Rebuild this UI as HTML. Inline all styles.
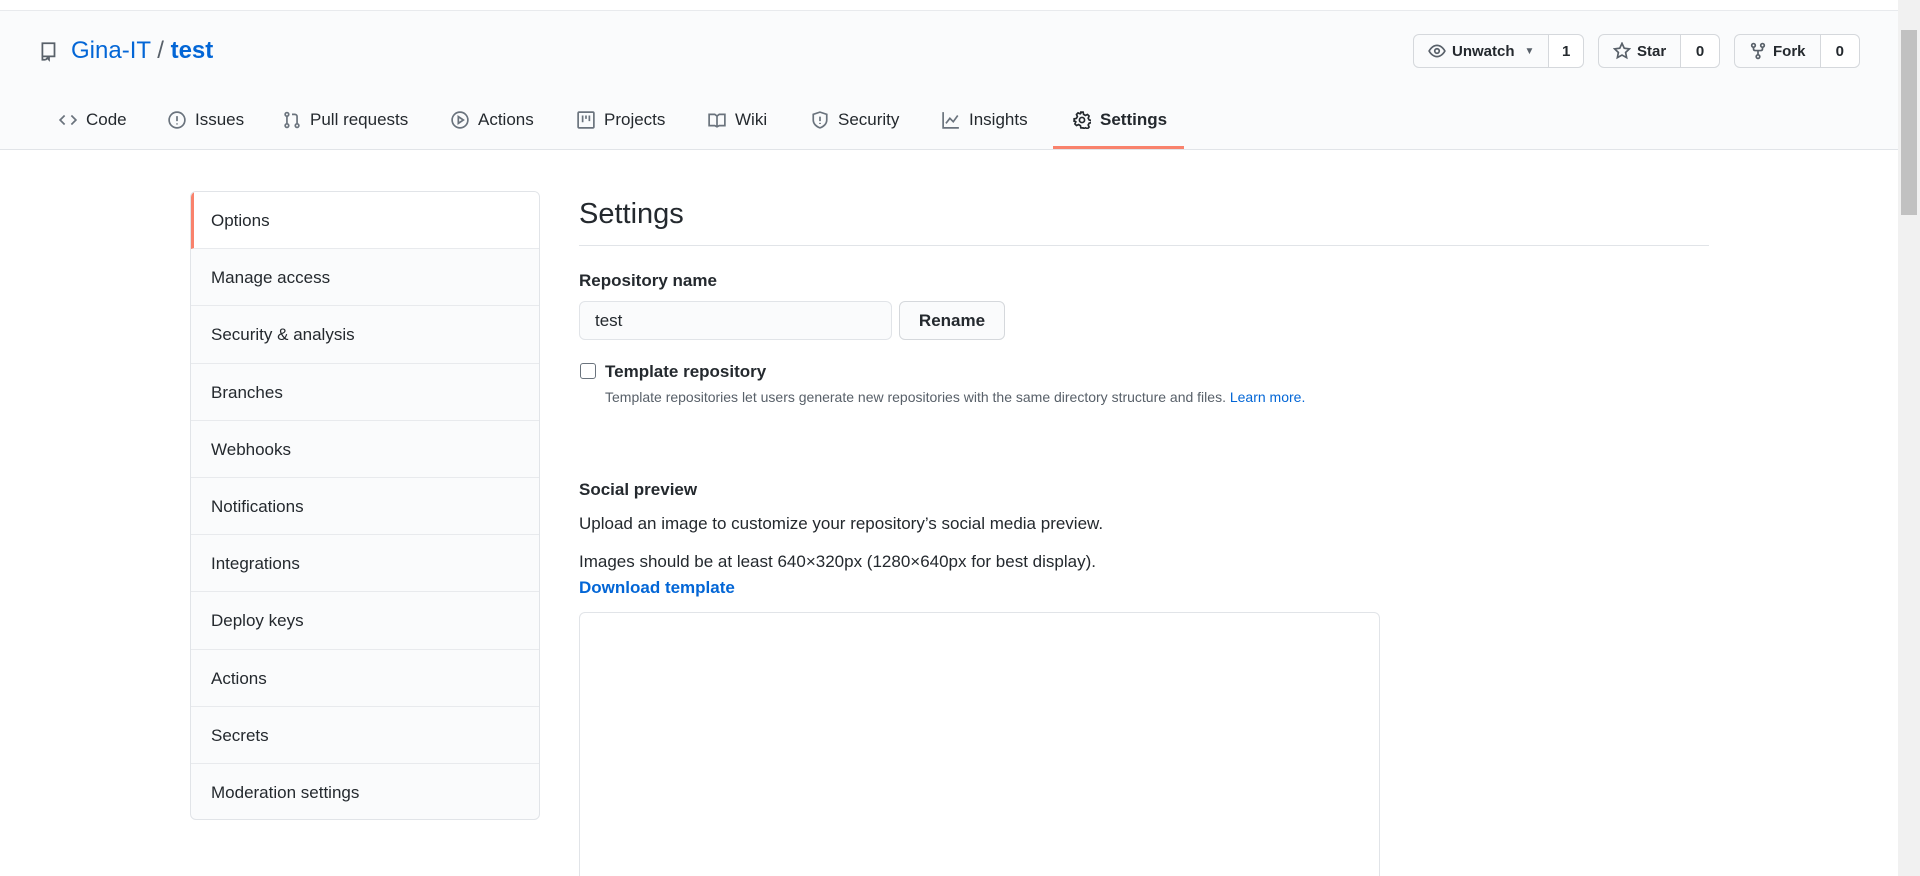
<!DOCTYPE html>
<html><head><meta charset="utf-8"><style>
*{box-sizing:border-box;margin:0;padding:0}
html,body{width:1920px;height:876px;overflow:hidden}
body{background:#fff;font-family:"Liberation Sans",sans-serif;color:#24292e;font-size:17px;position:relative}
.a{position:absolute;white-space:nowrap}
.hdr{position:absolute;left:0;top:10px;width:1898px;height:140px;background:#fafbfc;border-top:1px solid #e8eaed;border-bottom:1px solid #e1e4e8}
.tab{position:absolute;top:110px;font-size:17px;color:#24292e;display:flex;align-items:center;gap:9px}
.tab svg{width:18px;height:18px;fill:none;stroke:#6a737d;stroke-width:1.5}
.btn{position:absolute;top:34px;height:34px;border:1px solid #d5d8dc;border-radius:6px;background:#fafbfc;display:flex;font-size:15px;font-weight:bold;color:#24292e}
.btn .l{display:flex;align-items:center;gap:6px;padding:0 14px;border-right:1px solid #d5d8dc;height:100%}
.btn .r{display:flex;align-items:center;justify-content:center;flex:1;background:#fff;border-radius:0 6px 6px 0}
.btn svg{width:18px;height:18px;fill:none;stroke:#586069;stroke-width:1.5}
.side{position:absolute;left:190px;top:191px;width:350px;height:629px;border:1px solid #e1e4e8;border-radius:6px;overflow:hidden;background:#fafbfc}
.side div{height:57.2px;border-bottom:1px solid #e8eaed;padding-left:20px;line-height:57px;font-size:17px;color:#24292e}
.side div:first-child{background:#fff;border-left:3px solid #f9826c;padding-left:17px}
.side div:last-child{border-bottom:none}
</style></head><body>
<div class="hdr"></div>
<svg class="a" style="left:40px;top:41px" width="18" height="22" viewBox="0 0 16 20" fill="none" stroke="#586069" stroke-width="1.6"><path d="M2 2h11v12H2zM2 14v3h3M5 17l1.5-1.5L8 17v-3"/></svg>
<div class="a" style="left:71px;top:37px;font-size:24px;color:#0366d6">Gina-IT <span style="color:#586069">/</span> <b>test</b></div>

<div class="tab" style="left:59px"><svg viewBox="0 0 16 16"><path d="M5 4L1 8l4 4M11 4l4 4-4 4"/></svg>Code</div>
<div class="tab" style="left:168px"><svg viewBox="0 0 16 16"><circle cx="8" cy="8" r="7"/><path d="M8 4.5v4.5M8 11v1"/></svg>Issues</div>
<div class="tab" style="left:283px"><svg viewBox="0 0 16 16"><circle cx="3.5" cy="3" r="1.6"/><circle cx="3.5" cy="13" r="1.6"/><circle cx="12.5" cy="13" r="1.6"/><path d="M3.5 4.6v6.8M12.5 11.4V5a2 2 0 00-2-2H8"/></svg>Pull requests</div>
<div class="tab" style="left:451px"><svg viewBox="0 0 16 16"><circle cx="8" cy="8" r="7"/><path d="M6.5 5v6l4.5-3z"/></svg>Actions</div>
<div class="tab" style="left:577px"><svg viewBox="0 0 16 16"><rect x="1" y="1" width="14" height="14" rx="1"/><path d="M5 4v6M8 4v3M11 4v5"/></svg>Projects</div>
<div class="tab" style="left:708px"><svg viewBox="0 0 16 16"><path d="M1 3h5l2 1.5L10 3h5v10h-5l-2 1-2-1H1zM8 4.5v9.5"/></svg>Wiki</div>
<div class="tab" style="left:811px"><svg viewBox="0 0 16 16"><path d="M8 1l6 2v5c0 3.5-3 6-6 7-3-1-6-3.5-6-7V3z M8 5v4M8 10.5v1"/></svg>Security</div>
<div class="tab" style="left:942px"><svg viewBox="0 0 16 16"><path d="M1 1v14h14M3.5 11l3.5-4.5 3 3 4-5.5"/></svg>Insights</div>
<div class="tab" style="left:1073px;font-weight:bold"><svg viewBox="0 0 16 16" style="stroke:#24292e"><circle cx="8" cy="8" r="2.3"/><path d="M7 1h2l.4 2 1.6.9 1.9-.8 1.4 1.4-.8 1.9.9 1.6 2 .4v2l-2 .4-.9 1.6.8 1.9-1.4 1.4-1.9-.8-1.6.9L9 15H7l-.4-2-1.6-.9-1.9.8-1.4-1.4.8-1.9L1.6 9 1 9V7l2-.4.9-1.6-.8-1.9 1.4-1.4 1.9.8L7 2z"/></svg>Settings</div>
<div class="a" style="left:1053px;top:146px;width:131px;height:3px;background:#f9826c"></div>

<div class="btn" style="left:1413px;width:171px"><div class="l"><svg viewBox="0 0 16 16"><path d="M1 8s2.5-5 7-5 7 5 7 5-2.5 5-7 5-7-5-7-5z"/><circle cx="8" cy="8" r="2"/></svg>Unwatch <span style="font-size:10px;color:#586069;margin-left:4px">▼</span></div><div class="r">1</div></div>
<div class="btn" style="left:1598px;width:122px"><div class="l"><svg viewBox="0 0 16 16"><path d="M8 1.2l2 4.3 4.6.6-3.4 3.2.9 4.6L8 11.6l-4.1 2.3.9-4.6L1.4 6.1 6 5.5z"/></svg>Star</div><div class="r">0</div></div>
<div class="btn" style="left:1734px;width:126px"><div class="l"><svg viewBox="0 0 16 16"><circle cx="4" cy="3" r="1.6"/><circle cx="12" cy="3" r="1.6"/><circle cx="8" cy="13" r="1.6"/><path d="M4 4.6v1.4c0 1 .7 1.6 1.6 1.6h4.8c1 0 1.6-.6 1.6-1.6V4.6M8 7.6v3.8"/></svg>Fork</div><div class="r">0</div></div>

<div class="a" style="left:1898px;top:0;width:22px;height:876px;background:#f1f1f1"></div>
<div class="a" style="left:1901px;top:30px;width:16px;height:185px;background:#c1c1c1"></div>

<div class="side"><div>Options</div><div>Manage access</div><div>Security &amp; analysis</div><div>Branches</div><div>Webhooks</div><div>Notifications</div><div>Integrations</div><div>Deploy keys</div><div>Actions</div><div>Secrets</div><div>Moderation settings</div></div>

<div class="a" style="left:579px;top:198px;font-size:29px">Settings</div>
<div class="a" style="left:579px;top:245px;width:1130px;height:1px;background:#e1e4e8"></div>
<div class="a" style="left:579px;top:271px;font-size:17px;font-weight:bold">Repository name</div>
<div class="a" style="left:579px;top:301px;width:313px;height:39px;border:1px solid #e1e4e8;border-radius:6px;background:#fafbfc;padding:9px 15px;font-size:17px">test</div>
<div class="a" style="left:899px;top:301px;width:106px;height:39px;border:1px solid #d5d8dc;border-radius:6px;background:#fafbfc;text-align:center;line-height:37px;font-weight:bold;font-size:17px">Rename</div>
<div class="a" style="left:580px;top:363px;width:16px;height:16px;border:1px solid #6a737d;border-radius:3px;background:#fff"></div>
<div class="a" style="left:605px;top:362px;font-size:17px;font-weight:bold">Template repository</div>
<div class="a" style="left:605px;top:389px;font-size:14px;color:#586069">Template repositories let users generate new repositories with the same directory structure and files. <span style="color:#0366d6">Learn more.</span></div>

<div class="a" style="left:579px;top:480px;font-size:17px;font-weight:bold">Social preview</div>
<div class="a" style="left:579px;top:514px;font-size:17px">Upload an image to customize your repository’s social media preview.</div>
<div class="a" style="left:579px;top:552px;font-size:17px">Images should be at least 640×320px (1280×640px for best display).</div>
<div class="a" style="left:579px;top:578px;font-size:17px;font-weight:bold;color:#0366d6">Download template</div>
<div class="a" style="left:579px;top:612px;width:801px;height:270px;border:1px solid #e1e4e8;border-radius:6px"></div>
</body></html>
